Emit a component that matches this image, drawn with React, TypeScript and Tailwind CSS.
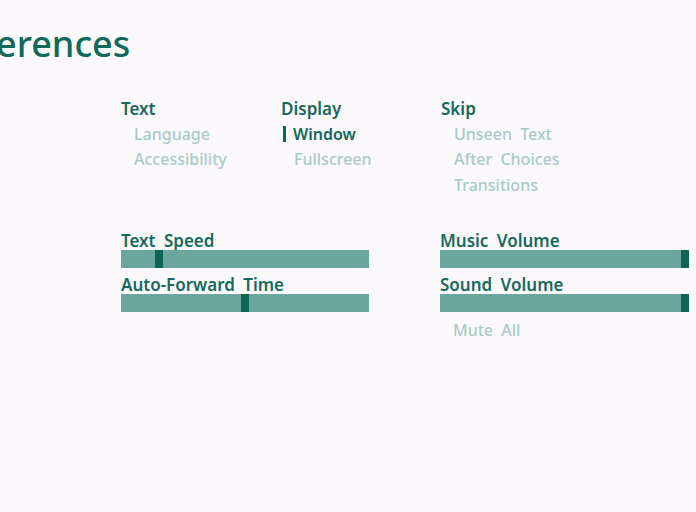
import React from "react";

const font = { fontFamily: '"Noto Sans", "Open Sans", sans-serif' };

function Column({ title, items, selected }: { title: string; items: string[]; selected?: string }) {
  return (
    <div className="w-[160px] flex flex-col">
      <div className="text-[17px] font-semibold text-[#16695d] leading-[22px] h-[22px] [word-spacing:4px]">{title}</div>
      <div className="flex flex-col mt-[1px]">
        {items.map((it) => (
          <div key={it} className="h-[25.5px] flex items-center pl-[2px]">
            {it === selected ? (
              <div className="flex items-center">
                <span className="w-[3px] h-[16px] bg-[#0e6555] mr-[7px]" />
                <span className="text-[16px] font-semibold text-[#12685a]">{it}</span>
              </div>
            ) : (
              <span className="ml-[11px] text-[16px] font-medium text-[#a7cbc6] [word-spacing:4px]">{it}</span>
            )}
          </div>
        ))}
      </div>
    </div>
  );
}

function Slider({ label, pos, width }: { label: string; pos: number; width: number }) {
  return (
    <div className="flex flex-col">
      <div className="text-[17px] font-semibold text-[#16695d] leading-[22px] h-[20px] [word-spacing:4px]">{label}</div>
      <div className="relative h-[18px] bg-[#6ba69e]" style={{ width }}>
        <div className="absolute top-0 h-[18px] w-[8px] bg-[#0e6555]" style={{ left: pos }} />
      </div>
    </div>
  );
}

export default function App() {
  return (
    <div className="w-[696px] h-[512px] bg-[#fcf9fc] overflow-hidden relative" style={font}>
      <div className="pt-[20px] ml-[-74px] text-[36px] font-medium text-[#0d6a5a] leading-[48px] whitespace-nowrap">
        Preferences
      </div>
      <div className="ml-[121px] mt-[30px] flex">
        <Column title="Text" items={["Language", "Accessibility"]} />
        <Column title="Display" items={["Window", "Fullscreen"]} selected="Window" />
        <Column title="Skip" items={["Unseen Text", "After Choices", "Transitions"]} />
      </div>
      <div className="ml-[121px] mt-[32px] flex">
        <div className="w-[319px] flex flex-col gap-[6px]">
          <Slider label="Text Speed" pos={34} width={248} />
          <Slider label="Auto-Forward Time" pos={120} width={248} />
        </div>
        <div className="flex flex-col gap-[6px]">
          <Slider label="Music Volume" pos={241} width={249} />
          <Slider label="Sound Volume" pos={241} width={249} />
          <div className="h-[24px] flex items-center pl-[13px] text-[16px] font-medium text-[#a7cbc6] [word-spacing:4px]">
            Mute All
          </div>
        </div>
      </div>
    </div>
  );
}
